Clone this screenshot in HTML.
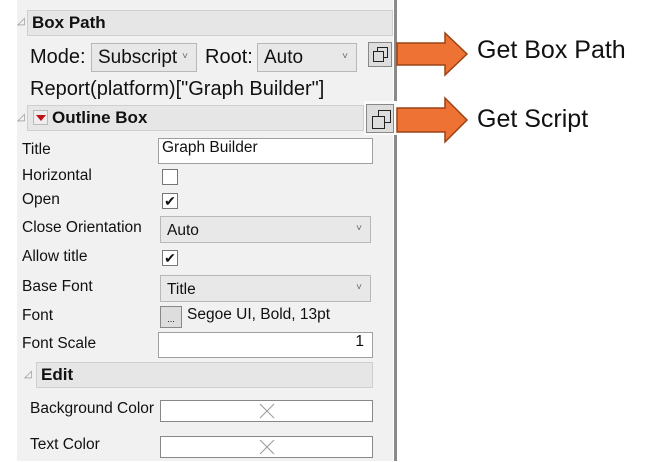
<!DOCTYPE html>
<html><head><style>
*{margin:0;padding:0;box-sizing:border-box}
body{width:653px;height:461px;background:#fff;position:relative;overflow:hidden;font-family:"Liberation Sans",sans-serif;color:#111}
.a{position:absolute}
.panel{left:17px;top:0;width:376px;height:461px;background:#f1f1f1}
.vline{left:394px;top:0;width:3px;height:461px;background:#8a8a8a}
.hdr{background:#e6e6e6;border:1px solid #cfcfcf;font-weight:bold;font-size:17px;line-height:23px;padding-left:4px}
.tri{font-size:10px;color:#888}
.dd{background:#e8e8e8;border:1px solid #b8b8b8;padding-left:6px}
.dd .c{position:absolute;right:8px;top:0;font-size:10px;color:#666}
.lbl{font-size:15.5px;left:22px}
.fld{background:#fff;border:1px solid #a0a0a0}
.cb{width:16px;height:16px;border:1px solid #777;background:#fff;font-size:14px;line-height:14px;text-align:center}
.btn{background:#ddd;border:1px solid #888}
.cp{position:absolute;width:11px;height:11px;border:1.5px solid #222;background:#ddd}
.big{font-size:25px;color:#111}
</style></head><body>
<div class="a panel"></div>
<div class="a vline"></div>
<div class="a" style="left:364px;top:101px;width:33px;height:34px;background:#fafafa"></div>

<div class="a tri" style="left:17px;top:16px">◿</div>
<div class="a hdr" style="left:27px;top:10px;width:366px;height:26px">Box Path</div>

<div class="a" style="left:30px;top:46px;font-size:20px">Mode:</div>
<div class="a dd" style="left:91px;top:43px;width:106px;height:29px;font-size:19px;line-height:28px">Subscript<span class="c" style="line-height:26px">˅</span></div>
<div class="a" style="left:205px;top:46px;font-size:20px">Root:</div>
<div class="a dd" style="left:257px;top:43px;width:100px;height:29px;font-size:19px;line-height:28px">Auto<span class="c" style="line-height:26px">˅</span></div>
<div class="a btn" style="left:368px;top:42px;width:24px;height:25px"><div class="cp" style="left:8px;top:4px"></div><div class="cp" style="left:4px;top:8px"></div></div>
<div class="a" style="left:30px;top:78px;font-size:20px">Report(platform)["Graph Builder"]</div>

<div class="a tri" style="left:17px;top:112px">◿</div>
<div class="a hdr" style="left:27px;top:105px;width:337px;height:26px;padding-left:24px">Outline Box</div>
<div class="a" style="left:33px;top:110px;width:15px;height:15px;background:#eee;border:1px solid #bbb"><div style="margin:4px 0 0 2px;width:0;height:0;border-left:5px solid transparent;border-right:5px solid transparent;border-top:6px solid #c0101a"></div></div>
<div class="a btn" style="left:366px;top:104px;width:28px;height:29px"><div class="cp" style="left:11px;top:5px;width:13px;height:13px"></div><div class="cp" style="left:5px;top:11px;width:13px;height:13px"></div></div>

<div class="a lbl" style="top:141px">Title</div>
<div class="a fld" style="left:158px;top:138px;width:215px;height:26px;font-size:15.5px;padding:0 3px">Graph Builder</div>
<div class="a lbl" style="top:167px">Horizontal</div>
<div class="a cb" style="left:162px;top:169px"></div>
<div class="a lbl" style="top:191px">Open</div>
<div class="a cb" style="left:162px;top:193px">✔</div>
<div class="a lbl" style="top:219px">Close Orientation</div>
<div class="a dd" style="left:160px;top:216px;width:211px;height:27px;font-size:15.5px;line-height:28px">Auto<span class="c" style="line-height:24px">˅</span></div>
<div class="a lbl" style="top:248px">Allow title</div>
<div class="a cb" style="left:162px;top:250px">✔</div>
<div class="a lbl" style="top:278px">Base Font</div>
<div class="a dd" style="left:160px;top:275px;width:211px;height:27px;font-size:15.5px;line-height:28px">Title<span class="c" style="line-height:24px">˅</span></div>
<div class="a lbl" style="top:307px">Font</div>
<div class="a btn" style="left:160px;top:306px;width:22px;height:22px;font-size:9px;text-align:center;line-height:24px">...</div>
<div class="a" style="left:187px;top:306px;font-size:15.5px">Segoe UI, Bold, 13pt</div>
<div class="a lbl" style="top:335px">Font Scale</div>
<div class="a fld" style="left:158px;top:332px;width:215px;height:26px;font-size:15.5px;text-align:right;padding:0 8px">1</div>

<div class="a tri" style="left:24px;top:369px">◿</div>
<div class="a hdr" style="left:36px;top:362px;width:337px;height:26px">Edit</div>
<div class="a lbl" style="left:30px;top:400px">Background Color</div>
<div class="a fld" style="left:160px;top:400px;width:213px;height:22px;border-color:#888"><svg width="211" height="20"><path d="M99 3l14 14M113 3l-14 14" stroke="#999" stroke-width="1"/></svg></div>
<div class="a lbl" style="left:30px;top:436px">Text Color</div>
<div class="a fld" style="left:160px;top:436px;width:213px;height:22px;border-color:#888"><svg width="211" height="20"><path d="M99 3l14 14M113 3l-14 14" stroke="#999" stroke-width="1"/></svg></div>

<svg class="a" style="left:0;top:0" width="653" height="461">
<path d="M397 43H445V33L467 54L445 75V65H397Z" fill="#ed7233" stroke="#9a4317" stroke-width="1.5"/>
<path d="M397 108H445V98L467 120L445 142V132H397Z" fill="#ed7233" stroke="#9a4317" stroke-width="1.5"/>
</svg>
<div class="a big" style="left:477px;top:36px">Get Box Path</div>
<div class="a big" style="left:477px;top:105px">Get Script</div>
</body></html>
